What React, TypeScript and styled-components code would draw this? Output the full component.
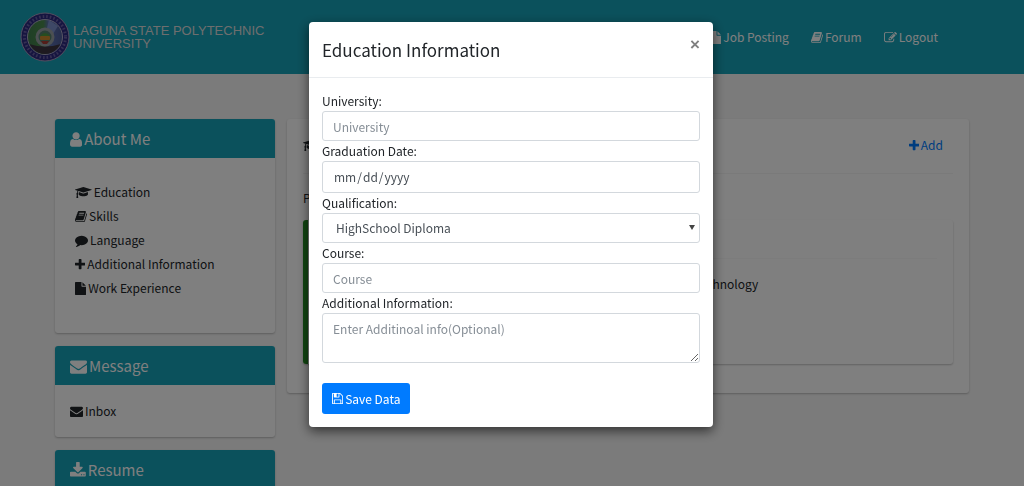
import React from "react";
import styled, { createGlobalStyle, css } from "styled-components";

const GlobalStyle = createGlobalStyle`
  *, *::before, *::after { box-sizing: border-box; }
  body {
    margin: 0;
    overflow: hidden;
    background: #f6f6f6;
    color: #212529;
    font: 12px/20px "Noto Sans CJK SC", "Noto Sans", sans-serif;
  }
`;

/* ---------- icons ---------- */

type Glyph = { box: string; ratio: number; d: string };

const glyphs: Record<string, Glyph> = {
  plus: {
    box: "192 0 1408 1792", ratio: 1408 / 1792,
    d: "M1600 736v192q0 40-28 68t-68 28h-416v416q0 40-28 68t-68 28h-192q-40 0-68-28t-28-68v-416h-416q-40 0-68-28t-28-68v-192q0-40 28-68t68-28h416v-416q0-40 28-68t68-28h192q40 0 68 28t28 68v416h416q40 0 68 28t28 68z",
  },
  user: {
    box: "256 0 1280 1792", ratio: 1280 / 1792,
    d: "M1536 1399q0 109-62.5 187t-150.5 78h-854q-88 0-150.5-78t-62.5-187q0-85 8.5-160.5t31.5-152 58.5-131 94-89 134.5-34.5q131 128 313 128t313-128q76 0 134.5 34.5t94 89 58.5 131 31.5 152 8.5 160.5zm-256-887q0 159-112.5 271.5t-271.5 112.5-271.5-112.5-112.5-271.5 112.5-271.5 271.5-112.5 271.5 112.5 112.5 271.5z",
  },
  envelope: {
    box: "0 0 1792 1792", ratio: 1,
    d: "M1792 710v794q0 66-47 113t-113 47h-1472q-66 0-113-47t-47-113v-794q44 49 101 87 362 246 497 345 57 42 92.5 65.5t94.5 48 110 24.5h2q51 0 110-24.5t94.5-48 92.5-65.5q170-123 498-345 57-39 100-87zm0-294q0 79-49 151t-122 123q-376 261-468 325-10 7-42.5 31t-54 38.5-52 32.5-57.5 27-50 9h-2q-23 0-50-9t-57.5-27-52-32.5-54-38.5-42.5-31q-91-64-262-182.5t-205-142.5q-62-42-117-115.5t-55-136.5q0-78 41.5-130t118.5-52h1472q65 0 112.5 47t47.5 113z",
  },
  comment: {
    box: "0 0 1792 1792", ratio: 1,
    d: "M1792 896q0 174-120 321.5t-326 233-450 85.5q-70 0-145-8-198 175-460 242-49 14-114 22-17 2-30.5-9t-17.5-29v-1q-3-4-.5-12t2-10 4.5-9.5l6-9 7-8.5 8-9q7-8 31-34.5t34.5-38 31-39.5 32.5-51 27-59 26-76q-157-89-247.5-220t-90.5-281q0-130 71-248.5t191-204.5 286-136.5 348-50.5q244 0 450 85.5t326 233 120 321.5z",
  },
  file: {
    box: "128 0 1536 1792", ratio: 1536 / 1792,
    d: "M1152 512v-472q22 14 36 28l408 408q14 14 28 36h-472zm-128 32q0 40 28 68t68 28h544v1056q0 40-28 68t-68 28h-1344q-40 0-68-28t-28-68v-1600q0-40 28-68t68-28h800v544z",
  },
  book: {
    box: "64 0 1664 1792", ratio: 1664 / 1792,
    d: "M1703 478q40 57 18 129l-275 906q-19 64-76.5 107.5t-122.5 43.5h-923q-77 0-148.5-53.5t-99.5-131.5q-24-67-2-127 0-4 3-27t4-37q1-8-3-21.5t-3-19.5q2-11 8-21t16.5-23.5 16.5-23.5q23-38 45-91.5t30-91.5q3-10 .5-30t-.5-28q3-11 17-28t17-23q21-36 42-92t25-90q1-9-2.5-32t.5-28q4-13 22-30.5t22-22.5q19-26 42.5-84.5t27.5-96.5q1-8-3-25.5t-2-26.5q2-8 9-18t18-23 17-21q8-12 16.5-30.5t15-35 16-36 19.5-32 26.5-23.5 36-11.5 47.5 5.5l-1 3q38-9 51-9h761q74 0 114 56t18 130l-274 906q-36 119-71.5 153.5t-128.5 34.5h-869q-27 0-38 15-11 16-1 43 24 70 144 70h923q29 0 56-15.5t35-41.5l300-987q7-22 5-57 38 15 59 43zm-1064 2q-4 13 2 22.5t20 9.5h608q13 0 25.5-9.5t16.5-22.5l21-64q4-13-2-22.5t-20-9.5h-608q-13 0-25.5 9.5t-16.5 22.5zm-83 256q-4 13 2 22.5t20 9.5h608q13 0 25.5-9.5t16.5-22.5l21-64q4-13-2-22.5t-20-9.5h-608q-13 0-25.5 9.5t-16.5 22.5z",
  },
  download: {
    box: "64 0 1664 1792", ratio: 1664 / 1792,
    d: "M1344 1344q0-26-19-45t-45-19-45 19-19 45 19 45 45 19 45-19 19-45zm256 0q0-26-19-45t-45-19-45 19-19 45 19 45 45 19 45-19 19-45zm128-224v320q0 40-28 68t-68 28h-1472q-40 0-68-28t-28-68v-320q0-40 28-68t68-28h465l135 136q58 56 136 56t136-56l136-136h464q40 0 68 28t28 68zm-325-569q17 41-14 70l-448 448q-18 19-45 19t-45-19l-448-448q-31-29-14-70 17-39 59-39h256v-448q0-26 19-45t45-19h256q26 0 45 19t19 45v448h256q42 0 59 39z",
  },
  cap: {
    box: "0 0 2304 1792", ratio: 2304 / 1792,
    d: "M1774 836l18 316q4 69-82 128t-235 93.5-323 34.5-323-34.5-235-93.5-82-128l18-316 574 181q22 7 48 7t48-7zm530-324q0 23-22 31l-1120 352q-4 1-10 1t-10-1l-652-206q-43 34-71 111.5t-34 178.5q63 36 63 109 0 69-58 107l58 433q2 14-8 25-9 11-24 11h-192q-15 0-24-11-10-11-8-25l58-433q-58-38-58-107 0-73 65-111 11-207 98-330l-333-104q-22-8-22-31t22-31l1120-352q4-1 10-1t10 1l1120 352q22 8 22 31z",
  },
  edit: {
    box: "0 0 1792 1792", ratio: 1,
    d: "M888 1184l116-116-152-152-116 116v56h96v96h56zm440-720q-16-16-33 1l-350 350q-17 17-1 33t33-1l350-350q17-17 1-33zm80 594v190q0 119-84.5 203.5t-203.5 84.5h-832q-119 0-203.5-84.5t-84.5-203.5v-832q0-119 84.5-203.5t203.5-84.5h832q63 0 117 25 15 7 18 23 3 17-9 29l-49 49q-14 14-32 8-23-6-45-6h-832q-66 0-113 47t-47 113v832q0 66 47 113t113 47h832q66 0 113-47t47-113v-126q0-13 9-22l64-64q15-15 35-7t20 29zm-96-738l288 288-672 672h-288v-288zm444 132l-92 92-288-288 92-92q28-28 68-28t68 28l152 152q28 28 28 68t-28 68z",
  },
  save: {
    box: "128 0 1536 1792", ratio: 1536 / 1792,
    d: "M512 1536h768v-384h-768v384zm896 0h128v-896q0-14-10-38.5t-20-34.5l-281-281q-10-10-34-20t-39-10v416q0 40-28 68t-68 28h-576q-40 0-68-28t-28-68v-416h-128v1280h128v-416q0-40 28-68t68-28h832q40 0 68 28t28 68v416zm-384-928v-320q0-13-9.5-22.5t-22.5-9.5h-192q-13 0-22.5 9.5t-9.5 22.5v320q0 13 9.5 22.5t22.5 9.5h192q13 0 22.5-9.5t9.5-22.5zm640 32v928q0 40-28 68t-68 28h-1344q-40 0-68-28t-28-68v-1344q0-40 28-68t68-28h928q40 0 88 20t76 48l280 280q28 28 48 76t20 88z",
  },
};

const IconSvg = styled.svg`
  flex: none;
  fill: currentColor;
`;

const Icon = ({ name, size = 13 }: { name: string; size?: number }) => {
  const g = glyphs[name];
  return (
    <IconSvg viewBox={g.box} height={size} width={size * g.ratio} aria-hidden="true">
      <path d={g.d} />
    </IconSvg>
  );
};

const Seal = () => (
  <svg width="50" height="50" viewBox="0 0 50 50" aria-hidden="true">
    <defs>
      <linearGradient id="field" x1="0" x2="1" y1="0" y2="0">
        <stop offset="0" stopColor="#3f7d4c" />
        <stop offset="0.45" stopColor="#4a8a4c" />
        <stop offset="0.6" stopColor="#5c70b0" />
        <stop offset="1" stopColor="#4c5c98" />
      </linearGradient>
      <clipPath id="disc"><circle cx="25" cy="25" r="17" /></clipPath>
    </defs>
    <circle cx="25" cy="25" r="24" fill="#2c2a80" stroke="#a79cc0" strokeWidth="1" />
    <circle cx="25" cy="25" r="20.5" fill="none" stroke="#6a60a4" strokeWidth="3" strokeDasharray="1.6 2" />
    <circle cx="25" cy="25" r="17.5" fill="url(#field)" stroke="#b0acc8" strokeWidth="1" />
    <g clipPath="url(#disc)">
      <path d="M6 31 Q25 38 44 31 V44 H6Z" fill="#3c3440" />
      <path d="M29 8 L38 14 L33 22 L27 16Z" fill="#7c90cc" />
    </g>
    <circle cx="25" cy="25" r="8" fill="#54806c" stroke="#98a0a4" strokeWidth="3" />
    <path d="M20 24 Q25 18 30 24Z" fill="#4e9a40" />
    <rect x="20" y="24" width="10" height="4" rx="1" fill="#cc8a2c" />
    <path d="M21 29 h8 l-2 3 h-4Z" fill="#a83c34" />
  </svg>
);

/* ---------- page ---------- */

const TopBar = styled.header`
  display: flex;
  align-items: center;
  justify-content: space-between;
  min-height: 74px;
  padding: 0 86px 0 20px;
  background: #17a2b8;
  color: #fff;
`;

const Brand = styled.a`
  display: flex;
  align-items: center;
  gap: 3px;
  color: #ddd;
  text-decoration: none;
  font: 13px/13px "Liberation Sans", Arial, sans-serif;
`;

const Nav = styled.nav`
  display: flex;
  gap: 22px;
`;

const IconLink = styled.a<{ $tone?: string }>`
  display: flex;
  align-items: center;
  gap: 2px;
  color: ${(p) => p.$tone ?? "inherit"};
  text-decoration: none;
`;

const Content = styled.main`
  display: grid;
  grid-template-columns: 220px minmax(0, 1fr);
  align-items: start;
  gap: 12px;
  max-width: 914px;
  margin: 45px auto 0;
`;

const Sidebar = styled.aside`
  display: grid;
  gap: 13px;
`;

const Card = styled.section`
  border-radius: 3px;
  background: #fff;
  box-shadow: 0 1px 2px rgba(0, 0, 0, 0.24);
`;

const CardTitle = styled.h2`
  display: flex;
  align-items: center;
  gap: 2px;
  margin: 0;
  padding: 8px 15px 7px;
  border-radius: 3px 3px 0 0;
  background: #17a2b8;
  color: #fff;
  font-size: 15px;
  font-weight: 400;
  line-height: 24px;
`;

const LinkList = styled.ul<{ $inset?: boolean }>`
  display: grid;
  gap: 4px;
  margin: 0;
  padding: ${(p) => (p.$inset ? "24px 20px 35px" : "16px 15px")};
  list-style: none;
`;

const MainCard = styled(Card)`
  padding: 16px 16px 29px;
`;

const MainHead = styled.div`
  display: flex;
  align-items: center;
  justify-content: space-between;
  padding: 0 10px 18px 0;
  border-bottom: 1px solid #f4f4f4;
`;

const Note = styled.p`
  margin: 14px 0 12px;
`;

const Entry = styled.article`
  min-height: 144px;
  border-left: 5px solid #228b22;
  border-radius: 3px;
  box-shadow: 0 1px 2px rgba(0, 0, 0, 0.24);
`;

const EntryHead = styled.div`
  height: 39px;
  margin: 0 16px;
  border-bottom: 1px solid #f8f8f8;
`;

const EntryRow = styled.div`
  display: grid;
  grid-template-columns: 49fr 51fr;
  padding-top: 15px;
`;

const EntryValue = styled.span`
  grid-column: 2;
`;

/* ---------- dialog ---------- */

const Backdrop = styled.div`
  position: fixed;
  inset: 0;
  padding: 22px 2px 22px 0;
  overflow: hidden;
  background: rgba(0, 0, 0, 0.5);
`;

const Dialog = styled.div`
  max-width: 404px;
  margin: 0 auto;
  border-radius: 4px;
  background: #fff;
  box-shadow: 0 4px 12px rgba(0, 0, 0, 0.6);
`;

const DialogHead = styled.div`
  display: flex;
  align-items: flex-start;
  justify-content: space-between;
  padding: 14px 13px 13px;
  border-bottom: 1px solid #e9ecef;
`;

const DialogTitle = styled.h1`
  margin: 0;
  font-size: 17px;
  font-weight: 400;
  line-height: 28px;
`;

const CloseButton = styled.button`
  padding: 0;
  border: 0;
  background: none;
  color: #7f7f7f;
  font: 700 17px/18px "Liberation Sans", Arial, sans-serif;
`;

const Form = styled.form`
  display: flex;
  flex-direction: column;
  align-items: flex-start;
  padding: 13px;
`;

const field = css`
  display: block;
  width: 100%;
  margin: 0;
  border: 1px solid #d3d8dd;
  border-radius: 3px;
  background: #fff;
  color: #495057;
  font: 12px/20px "Noto Sans CJK SC", "Noto Sans", sans-serif;
  &::placeholder { color: #868e96; opacity: 1; }
`;

const TextInput = styled.input`
  ${field}
  height: 30px;
  padding: 4px 10px;
`;

const DateInput = styled.input`
  ${field}
  height: 32px;
  padding: 4px 10px;
  &::-webkit-calendar-picker-indicator { display: none; }
`;

const SelectWrap = styled.div`
  position: relative;
  width: 100%;
  &::after {
    content: "";
    position: absolute;
    top: 12px;
    right: 5px;
    border: 3px solid transparent;
    border-top: 5px solid #444;
    border-bottom: 0;
    pointer-events: none;
  }
`;

const Select = styled.select`
  ${field}
  height: 30px;
  padding: 4px 13px;
  appearance: none;
`;

const TextArea = styled.textarea`
  ${field}
  height: 50px;
  padding: 5px 10px;
  resize: vertical;
`;

const SaveButton = styled.button`
  display: flex;
  align-items: center;
  gap: 2px;
  height: 31px;
  margin-top: 20px;
  padding: 0 10px;
  border: 0;
  border-radius: 3px;
  background: #007bff;
  color: #fff;
  font: 12px/20px "Noto Sans CJK SC", "Noto Sans", sans-serif;
`;

const aboutLinks = [
  ["cap", "Education"],
  ["book", "Skills"],
  ["comment", "Language"],
  ["plus", "Additional Information"],
  ["file", "Work Experience"],
];

const navLinks = [
  ["file", "Job Posting"],
  ["book", "Forum"],
  ["edit", "Logout"],
];

export default function App() {
  return (
    <>
      <GlobalStyle />
      <TopBar>
        <Brand href="#">
          <Seal />
          <span>LAGUNA STATE POLYTECHNIC<br />UNIVERSITY</span>
        </Brand>
        <Nav>
          {navLinks.map(([icon, text]) => (
            <IconLink key={text} href="#"><Icon name={icon} />{text}</IconLink>
          ))}
        </Nav>
      </TopBar>

      <Content>
        <Sidebar>
          <Card>
            <CardTitle><Icon name="user" size={17} />About Me</CardTitle>
            <LinkList $inset>
              {aboutLinks.map(([icon, text]) => (
                <li key={text}><IconLink href="#"><Icon name={icon} />{text}</IconLink></li>
              ))}
            </LinkList>
          </Card>
          <Card>
            <CardTitle><Icon name="envelope" size={17} />Message</CardTitle>
            <LinkList>
              <li><IconLink href="#"><Icon name="envelope" />Inbox</IconLink></li>
            </LinkList>
          </Card>
          <Card>
            <CardTitle><Icon name="download" size={17} />Resume</CardTitle>
          </Card>
        </Sidebar>

        <MainCard>
          <MainHead>
            <Icon name="cap" />
            <IconLink href="#" $tone="#007bff"><Icon name="plus" />Add</IconLink>
          </MainHead>
          <Note>P</Note>
          <Entry>
            <EntryHead />
            <EntryRow><EntryValue>Information Technology</EntryValue></EntryRow>
          </Entry>
        </MainCard>
      </Content>

      <Backdrop>
        <Dialog role="dialog" aria-modal="true" aria-labelledby="dialog-title">
          <DialogHead>
            <DialogTitle id="dialog-title">Education Information</DialogTitle>
            <CloseButton type="button" aria-label="Close">×</CloseButton>
          </DialogHead>
          <Form onSubmit={(e) => e.preventDefault()}>
            <label htmlFor="university">University:</label>
            <TextInput id="university" placeholder="University" />
            <label htmlFor="graduation">Graduation Date:</label>
            <DateInput id="graduation" type="date" />
            <label htmlFor="qualification">Qualification:</label>
            <SelectWrap>
              <Select id="qualification">
                <option>HighSchool Diploma</option>
              </Select>
            </SelectWrap>
            <label htmlFor="course">Course:</label>
            <TextInput id="course" placeholder="Course" />
            <label htmlFor="info">Additional Information:</label>
            <TextArea id="info" placeholder="Enter Additinoal info(Optional)" />
            <SaveButton type="submit"><Icon name="save" />Save Data</SaveButton>
          </Form>
        </Dialog>
      </Backdrop>
    </>
  );
}
